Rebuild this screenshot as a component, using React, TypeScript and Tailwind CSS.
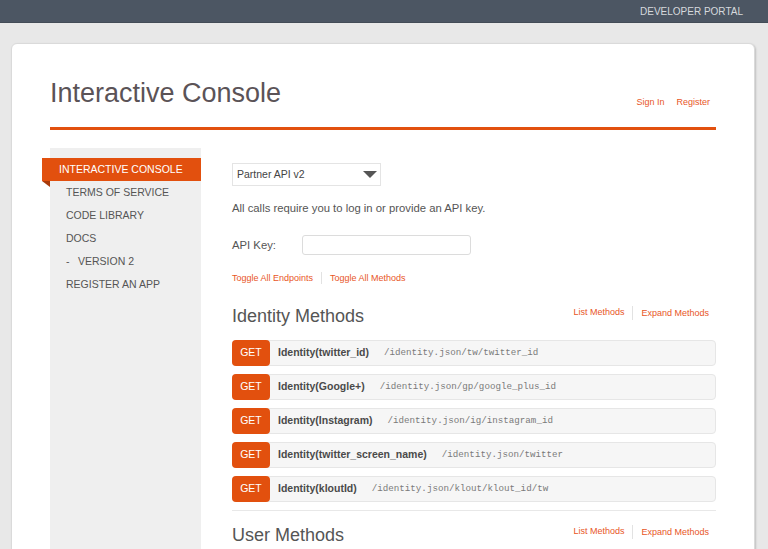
import React from 'react';

const navItems = ['TERMS OF SERVICE', 'CODE LIBRARY', 'DOCS', 'VERSION 2', 'REGISTER AN APP'];

const identityMethods = [
  { name: 'Identity(twitter_id)', path: '/identity.json/tw/twitter_id' },
  { name: 'Identity(Google+)', path: '/identity.json/gp/google_plus_id' },
  { name: 'Identity(Instagram)', path: '/identity.json/ig/instagram_id' },
  { name: 'Identity(twitter_screen_name)', path: '/identity.json/twitter' },
  { name: 'Identity(kloutId)', path: '/identity.json/klout/klout_id/tw' },
];

const MethodRow = ({ name, path }: { name: string; path: string }) => (
  <div className="flex items-center h-[26px] bg-[#f6f6f6] border border-[#e6e6e6] rounded-[4px]">
    <div className="-ml-px h-[26px] w-[38px] flex items-center justify-center bg-[#e2500e] rounded-[4px] text-white text-[10.5px]">
      GET
    </div>
    <span className="ml-[8px] font-bold text-[10.5px] text-[#4a4a4a]">{name}</span>
    <span className="ml-[15px] text-[9.2px] text-[#7a7a7a] font-['Liberation_Mono',monospace]">{path}</span>
  </div>
);

const SectionHeader = ({ title }: { title: string }) => (
  <div className="flex items-center justify-between h-[24px]">
    <h2 className="text-[18px] leading-[24px] text-[#555]">{title}</h2>
    <div className="flex items-center pb-[6px] pr-[7px] text-[9px] text-[#e8561f]">
      <span className="pr-[8px]">List Methods</span>
      <span className="pl-[8px] border-l border-[#e2e2e2] leading-[14px]">Expand Methods</span>
    </div>
  </div>
);

export default function App() {
  return (
    <div className="min-h-screen bg-[#e8e8e8] font-['Liberation_Sans',Arial,sans-serif]">
      {/* Top bar */}
      <header className="h-[23px] bg-[#4c5663] border-b border-[#434c57] flex items-center justify-end pr-[25px]">
        <span className="text-[10px] text-[#d6d9dd]">DEVELOPER PORTAL</span>
      </header>

      <div className="pt-[20px] pl-[11px] pr-[13px]">
        <div className="bg-white border border-[#dadada] rounded-[6px] shadow-[1px_1px_2px_rgba(0,0,0,0.18)] px-[38px] pt-[33px] pb-[40px]">
          {/* Title row */}
          <div className="flex items-end justify-between pb-[18px] border-b-[3px] border-[#e2500e]">
            <h1 className="text-[27px] leading-[32px] text-[#5b5357]">Interactive Console</h1>
            <div className="flex gap-[12px] pr-[6px] pb-[1px] text-[9px] leading-[12px] text-[#e8561f]">
              <span>Sign In</span>
              <span>Register</span>
            </div>
          </div>

          <div className="flex mt-[18px]">
            {/* Sidebar */}
            <aside className="w-[151px] shrink-0 bg-[#efefef] pt-[10px] min-h-[420px]">
              <div className="relative -ml-[8px] h-[23px] bg-[#e2500e] pl-[17px] flex items-center text-[10.5px] text-white">
                INTERACTIVE CONSOLE
                <div className="absolute left-0 top-full w-0 h-0 border-t-[6px] border-t-[#a83a0a] border-l-[8px] border-l-transparent" />
              </div>
              {navItems.map((item) => (
                <div key={item} className="h-[23px] pl-[16px] flex items-center text-[10.5px] text-[#555]">
                  {item === 'VERSION 2' ? (
                    <>
                      <span className="w-[12px]">-</span>
                      {item}
                    </>
                  ) : (
                    item
                  )}
                </div>
              ))}
            </aside>

            {/* Main */}
            <main className="flex-1 ml-[31px] pt-[15px]">
              <div className="w-[149px] h-[23px] border border-[#e4e4e4] flex items-center justify-between pl-[4px] pr-[3px]">
                <span className="text-[10.5px] text-[#444]">Partner API v2</span>
                <svg width="14" height="7" viewBox="0 0 14 7">
                  <polygon points="0,0 14,0 7,7" fill="#555" />
                </svg>
              </div>

              <p className="mt-[15px] text-[11.3px] leading-[14px] text-[#555]">
                All calls require you to log in or provide an API key.
              </p>

              <div className="mt-[20px] flex items-center">
                <span className="w-[70px] text-[11.3px] text-[#555]">API Key:</span>
                <div className="w-[169px] h-[20px] border border-[#dcdcdc] rounded-[3px] bg-white" />
              </div>

              <div className="mt-[17px] flex items-center text-[9px] leading-[12px] text-[#e8561f]">
                <span className="pr-[8px]">Toggle All Endpoints</span>
                <span className="pl-[8px] border-l border-[#e2e2e2]">Toggle All Methods</span>
              </div>

              <div className="mt-[20px]">
                <SectionHeader title="Identity Methods" />
              </div>

              <div className="mt-[12px] flex flex-col gap-[8px]">
                {identityMethods.map((m) => (
                  <MethodRow key={m.name} {...m} />
                ))}
              </div>

              <div className="mt-[8px] border-t border-[#e8e8e8]" />

              <div className="mt-[12px]">
                <SectionHeader title="User Methods" />
              </div>
            </main>
          </div>
        </div>
      </div>
    </div>
  );
}
